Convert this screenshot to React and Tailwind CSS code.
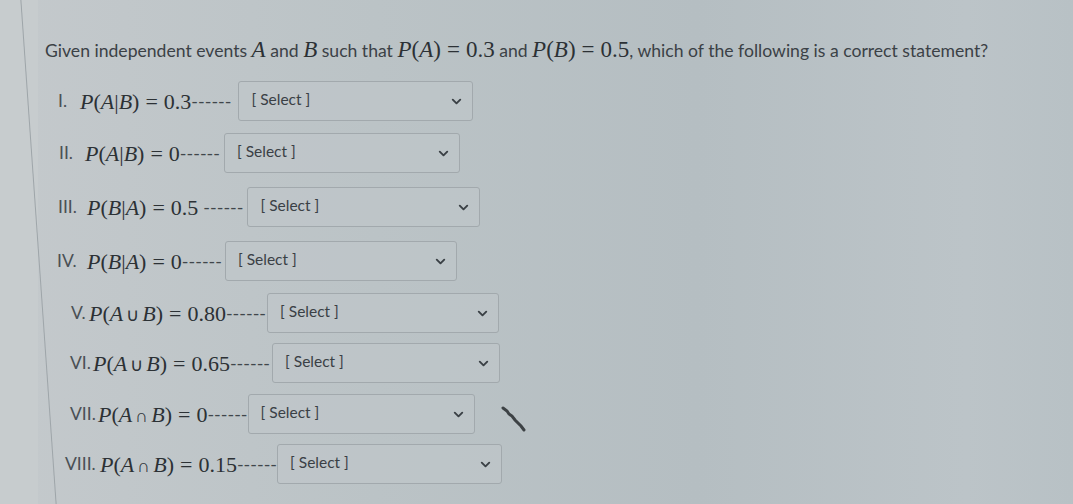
import React from 'react'
import { ChevronDown } from 'lucide-react'

// Inline math in a serif face, italic for variables
function V({ children }) {
  return (
    <span className="font-['Liberation_Serif',serif] italic [font-synthesis:style]">{children}</span>
  )
}

function M({ children, size = 'text-[22px]' }) {
  return (
    <span className={`font-['Liberation_Serif','Times_New_Roman',serif] text-[#2c3135] ${size}`}>
      {children}
    </span>
  )
}

function Eq() {
  return <span className="mx-[6px]">=</span>
}

function Op({ children }) {
  return <span className="mx-[3px] text-[18px]">{children}</span>
}

function SelectBox({ width }) {
  return (
    <div
      className={`flex h-10 items-center justify-between rounded-[3px] border border-[#a2a9ad] bg-[#bfc6c9]/60 pl-[12px] pr-[8px] ${width}`}
    >
      <span className="-mt-[2px] font-['Lato','Open_Sans',sans-serif] text-[15.5px] text-[#3a4045]">[ Select ]</span>
      <ChevronDown size={15} strokeWidth={3} className="text-[#3a4045]" />
    </div>
  )
}

function Row({ num, numW, pad, mt, width, gap = 'ml-px', dashGap = '', children }) {
  return (
    <div className={`flex h-10 items-center ${pad} ${mt}`}>
      <span className={`shrink-0 font-['Lato','Open_Sans',sans-serif] text-[17.5px] text-[#4a5055] ${numW}`}>{num}</span>
      <M>{children}</M>
      <span className={`font-['Lato','Open_Sans',sans-serif] text-[18px] text-[#40464b] ${dashGap}`}>------</span>
      <div className={gap}>
        <SelectBox width={width} />
      </div>
    </div>
  )
}

export default function App() {
  return (
    <div className="relative flex h-[504px] w-[1073px] overflow-hidden bg-[linear-gradient(90deg,#c4c9cc_0%,#bbc3c6_35%,#b5bec2_65%,#bcc4c8_90%,#b8c1c5_100%)]">
      {/* left gutter + panel edge (slightly skewed, it's a photo) */}
      <div className="w-[38px] shrink-0 bg-[#c7ccce]" />
      <div className="w-px shrink-0 skew-x-[4deg] bg-[#9ea5a9]" />

      <div className="flex-1 pl-[6px] pt-[38px]">
        <p className="font-['Lato','Open_Sans',sans-serif] text-[17.6px] leading-6 text-[#3b4146]">
          Given independent events{' '}
          <M size="text-[23px]">
            <V>A</V>
          </M>{' '}
          and{' '}
          <M size="text-[23px]">
            <V>B</V>
          </M>{' '}
          such that{' '}
          <M size="text-[23px]">
            <V>P</V>(<V>A</V>)<Eq />0.3
          </M>{' '}
          and{' '}
          <M size="text-[23px]">
            <V>P</V>(<V>B</V>)<Eq />0.5
          </M>
          , which of the following is a correct statement?
        </p>

        <div className="flex flex-col">
          <Row num="I." numW="w-[22px]" pad="pl-[13px]" mt="mt-[18px]" width="w-[235px]" gap="ml-[7px]">
            <V>P</V>(<V>A</V>|<V>B</V>)<Eq />0.3
          </Row>
          <Row num="II." numW="w-[26px]" pad="pl-[14px]" mt="mt-[12px]" width="w-[236px]" gap="ml-[4px]">
            <V>P</V>(<V>A</V>|<V>B</V>)<Eq />0
          </Row>
          <Row num="III." numW="w-[29px]" pad="pl-[13px]" mt="mt-[14px]" width="w-[233px]" gap="ml-[4px]" dashGap="ml-[5px]">
            <V>P</V>(<V>B</V>|<V>A</V>)<Eq />0.5
          </Row>
          <Row num="IV." numW="w-[30px]" pad="pl-[12px]" mt="mt-[14px]" width="w-[232px]" gap="ml-[3px]">
            <V>P</V>(<V>B</V>|<V>A</V>)<Eq />0
          </Row>
          <Row num="V." numW="w-[18px]" pad="pl-[26px]" mt="mt-[12px]" width="w-[232px]">
            <V>P</V>(<V>A</V><Op>∪</Op><V>B</V>)<Eq />0.80
          </Row>
          <Row num="VI." numW="w-[23px]" pad="pl-[25px]" mt="mt-[10px]" width="w-[228px]" gap="ml-[2px]">
            <V>P</V>(<V>A</V><Op>∪</Op><V>B</V>)<Eq />0.65
          </Row>
          <Row num="VII." numW="w-[28px]" pad="pl-[25px]" mt="mt-[11px]" width="w-[227px]" gap="ml-0">
            <V>P</V>(<V>A</V><Op>∩</Op><V>B</V>)<Eq />0
          </Row>
          <Row num="VIII." numW="w-[35px]" pad="pl-[20px]" mt="mt-[10px]" width="w-[225px]" gap="ml-0">
            <V>P</V>(<V>A</V><Op>∩</Op><V>B</V>)<Eq />0.15
          </Row>
        </div>
      </div>

      {/* smudge on the screen */}
      <svg className="absolute left-[500px] top-[405px]" width="30" height="30" viewBox="0 0 30 30">
        <path d="M3 3 L7 6 L9 9 L12 11 L15 15 L18 18 L21 21 L24 25" stroke="#3d4245" strokeWidth="3" strokeLinecap="round" fill="none" />
      </svg>
    </div>
  )
}
